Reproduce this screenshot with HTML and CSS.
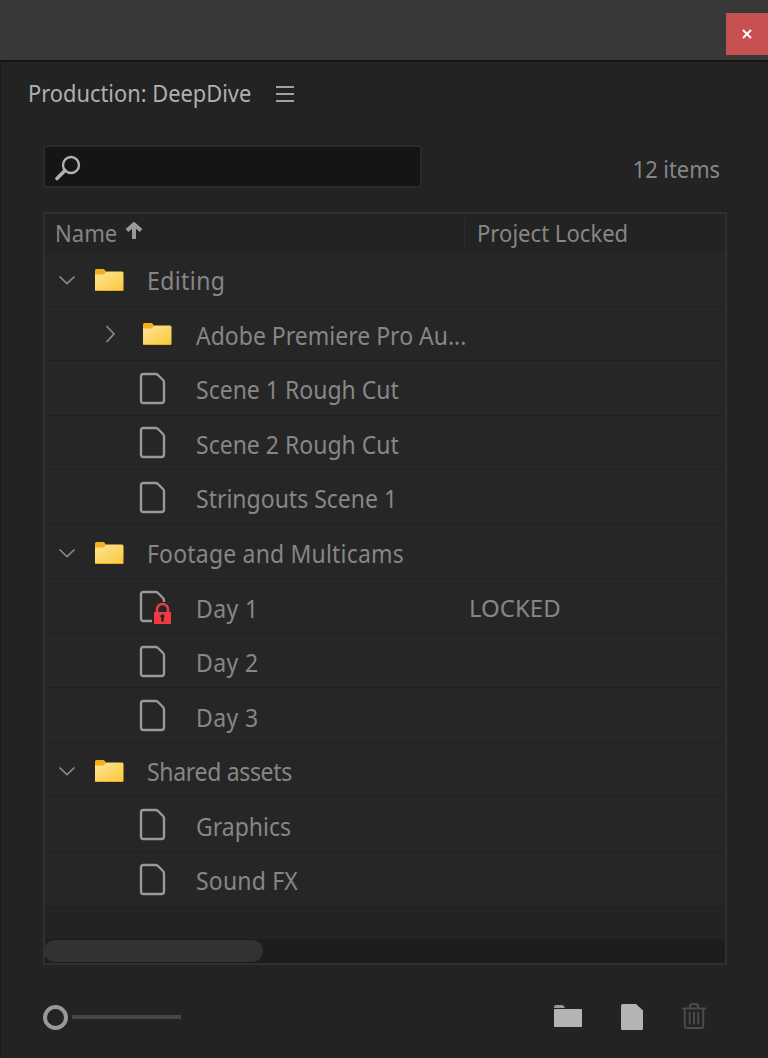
FILE: index.html
```html
<!DOCTYPE html>
<html lang="en">
<head>
<meta charset="utf-8">
<title>Production: DeepDive</title>
<link rel="stylesheet" href="styles.css">
</head>
<body>
<!-- shapes used by the rows -->
<svg class="defs" width="0" height="0">
  <defs>
    <linearGradient id="gold" x1="0" y1="0" x2="1" y2="1">
      <stop offset="0" stop-color="#ffe59a"/>
      <stop offset="1" stop-color="#fac838"/>
    </linearGradient>
  </defs>
  <symbol id="folder" viewBox="0 0 30 24">
    <path d="M1 2.5Q1 1 2.5 1H9q1 0 1.600 .8L12 3.500V9H1z" fill="#f4b11e"/>
    <path d="M1 6.500h8.500L12.500 3.500H28q1.500 0 1.500 1.500v17q0 1-1.500 1H2.500Q1 23 1 22z" fill="url(#gold)"/>
    <path d="M1.500 22.500h27.500" stroke="#e8ac25"/>
  </symbol>
  <symbol id="file" viewBox="0 0 32 34">
    <path d="M4.500 2H16.500Q18 2 19 3L24 8Q25 9 25 10.500V28.500q0 2.500-2.500 2.500h-18Q2 31 2 28.500V4.500Q2 2 4.500 2z" fill="none" stroke="#999" stroke-width="2.400" stroke-linejoin="round"/>
  </symbol>
  <symbol id="locked" viewBox="0 0 32 34">
    <path d="M13 31H4.500Q2 31 2 28.500V4.500Q2 2 4.500 2H16.500Q18 2 19 3L24 8Q25 9 25 10.500V12" fill="none" stroke="#999" stroke-width="2.400" stroke-linejoin="round"/>
    <path d="M18 24v-4.500a5.500 5.500 0 0 1 11 0V24" fill="none" stroke="#f23a42" stroke-width="2.600"/>
    <rect x="15" y="22" width="17" height="12" fill="#f23a42"/>
    <circle cx="23.500" cy="26.300" r="2" fill="#262626"/>
    <path d="M22.600 26.500h1.800l.5 5h-2.800z" fill="#262626"/>
  </symbol>
  <symbol id="down" viewBox="0 0 18 18">
    <path d="M1.500 5.500L9 12.500l7.500-7" fill="none" stroke="#8a8a8a" stroke-width="1.700"/>
  </symbol>
  <symbol id="right" viewBox="0 0 18 18">
    <path d="M5.500 1L13 9l-7.500 8" fill="none" stroke="#8a8a8a" stroke-width="1.700"/>
  </symbol>
</svg>

<div class="titlebar">
  <button class="close" aria-label="Close"><svg width="12" height="12" viewBox="0 0 12 12"><path d="M2 2l8 8M10 2l-8 8" stroke="#fff" stroke-width="1.900"/></svg></button>
</div>

<div class="panel">
  <div class="tab">
    <span class="tab-name">Production: DeepDive</span>
    <svg width="18" height="18" viewBox="0 0 18 18"><path d="M0 2h18M0 9h18M0 16h18" stroke="#a3a3a3" stroke-width="2"/></svg>
  </div>

  <div class="tools">
    <div class="search">
      <svg width="26" height="26" viewBox="0 0 26 26"><circle cx="16" cy="10" r="8" fill="none" stroke="#b0b0b0" stroke-width="2.400"/><path d="M10 15.500L2 23.500" stroke="#b0b0b0" stroke-width="3.600" stroke-linecap="round"/></svg>
    </div>
    <span class="count">12 items</span>
  </div>

  <div class="table">
    <div class="head">
      <div class="head-name"><span class="label">Name</span>
        <svg width="18" height="18" viewBox="0 0 18 18"><path d="M9 3v14M2 8.500L9 2.200l7 6.300" fill="none" stroke="#999" stroke-width="4"/></svg>
      </div>
      <div class="head-lock"><span class="label">Project Locked</span></div>
    </div>
    <div class="rows">
      <div class="row"><svg class="arrow"><use href="#down"/></svg><svg class="folder"><use href="#folder"/></svg><span class="name loose">Editing</span></div>
      <div class="row sub"><svg class="arrow"><use href="#right"/></svg><svg class="folder"><use href="#folder"/></svg><span class="name">Adobe Premiere Pro Au...</span></div>
      <div class="row sub"><svg class="file"><use href="#file"/></svg><span class="name">Scene 1 Rough Cut</span></div>
      <div class="row sub"><svg class="file"><use href="#file"/></svg><span class="name">Scene 2 Rough Cut</span></div>
      <div class="row sub"><svg class="file"><use href="#file"/></svg><span class="name">Stringouts Scene 1</span></div>
      <div class="row"><svg class="arrow"><use href="#down"/></svg><svg class="folder"><use href="#folder"/></svg><span class="name open">Footage and Multicams</span></div>
      <div class="row sub"><svg class="file"><use href="#locked"/></svg><span class="name loose">Day 1</span><span class="lock">LOCKED</span></div>
      <div class="row sub"><svg class="file"><use href="#file"/></svg><span class="name loose">Day 2</span></div>
      <div class="row sub"><svg class="file"><use href="#file"/></svg><span class="name loose">Day 3</span></div>
      <div class="row"><svg class="arrow"><use href="#down"/></svg><svg class="folder"><use href="#folder"/></svg><span class="name tight">Shared assets</span></div>
      <div class="row sub"><svg class="file"><use href="#file"/></svg><span class="name">Graphics</span></div>
      <div class="row sub"><svg class="file"><use href="#file"/></svg><span class="name open">Sound FX</span></div>
    </div>
    <div class="scroll"><div class="thumb"></div></div>
  </div>

  <div class="footer">
    <div class="zoom"><span class="knob"></span><span class="track"></span></div>
    <div class="actions">
      <svg width="28" height="28" viewBox="0 0 28 28"><path d="M0 5V4q0-2 2-2h7l2 3z" fill="#999"/><rect x="0" y="6" width="28" height="18" rx="1" fill="#b4b4b4"/></svg>
      <svg width="22" height="28" viewBox="0 0 22 28"><path d="M1.500 1H15l7 6.500V25.500q0 1.500-1.500 1.500h-19Q0 27 0 25.500v-23Q0 1 1.500 1z" fill="#b4b4b4"/></svg>
      <svg width="24" height="28" viewBox="0 0 24 28"><path d="M0 5.500h24M2.800 6V23q0 2 2 2h14.400q2 0 2-2V6M8 4.500V3.500Q8 1 10.500 1h3Q16 1 16 3.500v1M7.700 9v12.500M12 9v12.500M16.300 9v12.500" fill="none" stroke="#4b4b4b" stroke-width="2"/></svg>
    </div>
  </div>
</div>
</body>
</html>
```
FILE: styles.css
```css
* {
    box-sizing: border-box;
}

body {
    margin: 0;
    height: 1058px;
    display: flex;
    flex-direction: column;
    overflow: hidden;
    background: #232323;
    color: #868686;
    font-family: "Noto Sans", "Open Sans", sans-serif;
    font-size: 25px;
    white-space: nowrap;
}

svg {
    display: block;
    flex: none;
}

svg.defs {
    height: 0;
}

.titlebar {
    height: 62px;
    flex: none;
    padding-top: 13px;
    display: flex;
    justify-content: flex-end;
    background: #383838;
    border-bottom: 2px solid #161616;
}

.close {
    width: 42px;
    height: 42px;
    padding: 0;
    border: 0;
    display: flex;
    align-items: center;
    justify-content: center;
    background: #c75050;
}

.panel {
    flex: 1;
    padding: 0 40px 0 42px;
    border-left: 1px solid #1a1a1a;
    border-right: 1px solid #202020;
}

.tab {
    height: 63px;
    margin-left: -15px;
    display: flex;
    align-items: center;
    color: #b0b0b0;
    font-size: 23px;
}

/* narrow lettering */
.tab-name, .label, .name {
    transform: scaleX(.92);
    transform-origin: left;
}

.tab-name {
    width: 248px;
    margin-top: -1px;
    transform: scaleX(.95);
}

.tools {
    height: 87px;
    padding: 20px 7px 0 0;
    display: flex;
    justify-content: space-between;
}

.search {
    width: 379px;
    height: 43px;
    padding: 8px 10px;
    border: 2px solid #2a2a2a;
    border-radius: 4px;
    background: #151515;
}

.count {
    line-height: 48px;
    font-size: 24px;
    transform: scaleX(.91);
    transform-origin: right;
}

/* project list */
.table {
    height: 753px;
    display: flex;
    flex-direction: column;
    border: 2px solid #303030;
}

.head {
    height: 38px;
    flex: none;
    display: flex;
    align-items: center;
    font-size: 24px;
}

.head-name {
    width: 419px;
    padding-left: 10px;
    display: flex;
    line-height: 28px;
}

.head-name svg {
    margin: 3px 0 0 2px;
}

.head-lock {
    height: 28px;
    padding-left: 12px;
    border-left: 1px solid #2b2b2b;
    line-height: 28px;
}

.label {
    display: block;
}

.rows {
    height: 687px;
}

.row {
    height: 54.560px;
    padding: 2px 0 0 13px;
    display: grid;
    grid-template-columns: 36px 53px 322px auto;
    align-items: center;
    background: #262626;
    border-bottom: 1px solid #202020;
}

.sub {
    padding-left: 56px;
    grid-template-columns: 41px 54px 273px auto;
}

.arrow {
    width: 18px;
    height: 18px;
}

.folder {
    width: 30px;
    height: 24px;
}

.file {
    width: 32px;
    height: 34px;
    grid-column: 2;
    margin-left: -3px;
}

.name {
    grid-column: 3;
    padding-top: 1px;
}

.open {
    letter-spacing: .2px;
}

.loose {
    letter-spacing: .45px;
}

.tight {
    letter-spacing: -.35px;
}

.lock {
    padding-top: 1px;
    font-size: 24px;
}

.scroll {
    height: 24px;
    background: #1d1d1d;
}

.thumb {
    width: 219px;
    height: 22px;
    margin: 1px 0 0 -1px;
    border-radius: 11px;
    background: #323232;
}

/* thumbnail size and buttons */
.footer {
    height: 104px;
    padding: 0 21px 0 0;
    display: flex;
    align-items: center;
    justify-content: space-between;
}

.zoom {
    display: flex;
    align-items: center;
    gap: 4px;
}

.knob {
    width: 25px;
    height: 25px;
    border: 4px solid #999;
    border-radius: 50%;
}

.track {
    width: 109px;
    height: 4px;
    background: #484848;
}

.actions {
    display: flex;
    gap: 39px;
}
```
